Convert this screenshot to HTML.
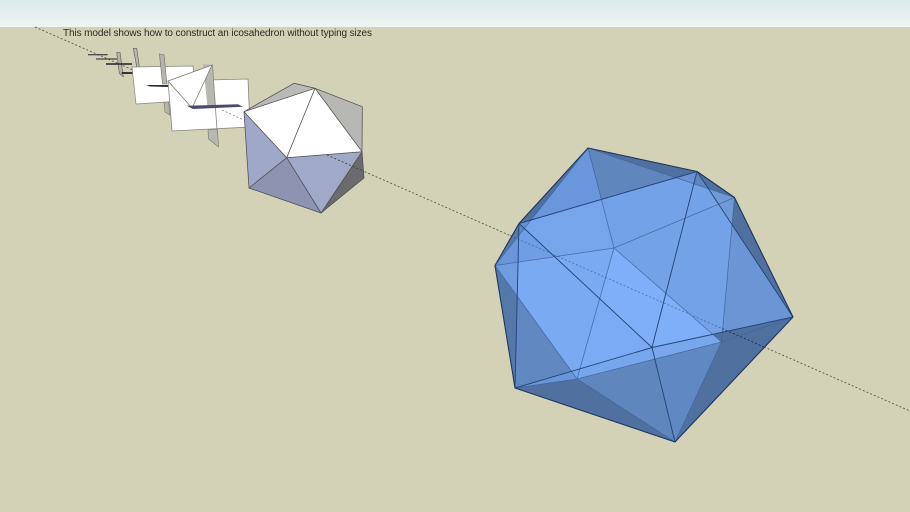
<!DOCTYPE html>
<html>
<head>
<meta charset="utf-8">
<style>
html,body{margin:0;padding:0;background:#d4d2b6;width:910px;height:512px;overflow:hidden}
svg{display:block}
text{font-family:"Liberation Sans",sans-serif}
.soft{filter:blur(.3px)}
</style>
</head>
<body>
<svg width="910" height="512" viewBox="0 0 910 512" xmlns="http://www.w3.org/2000/svg">
<defs>
<linearGradient id="sky" x1="0" y1="0" x2="0" y2="1">
<stop offset="0" stop-color="#dbe9e9"/>
<stop offset="1" stop-color="#eef4f2"/>
</linearGradient>
<clipPath id="f1"><polygon points="588,148 519,223.5 697,171.5"/></clipPath>
<clipPath id="f2"><polygon points="519,223.5 652,347.5 697,171.5"/></clipPath>
<clipPath id="f3"><polygon points="519,223.5 515,388 652,347.5"/></clipPath>
<clipPath id="f4"><polygon points="515,388 675,442 652,347.5"/></clipPath>
<clipPath id="f5"><polygon points="652,347.5 675,442 793,317"/></clipPath>
<clipPath id="f6"><polygon points="652,347.5 793,317 697,171.5"/></clipPath>
<clipPath id="f7"><polygon points="697,171.5 734.5,197.5 793,317"/></clipPath>
<clipPath id="f8"><polygon points="495,265.5 519,223.5 515,388"/></clipPath>
<polygon id="agp" points="588,148 495,265.5 614,248"/>
<polygon id="gpr" points="495,265.5 614,248 577,379"/>
<polygon id="apc" points="588,148 614,248 734.5,197.5"/>
<polygon id="pqr" points="614,248 721.5,342 577,379"/>
<polygon id="cpq" points="734.5,197.5 614,248 721.5,342"/>
<polygon id="grf" points="495,265.5 577,379 515,388"/>
<polygon id="fre" points="515,388 577,379 675,442"/>
<polygon id="req" points="577,379 675,442 721.5,342"/>
<polygon id="qed" points="721.5,342 675,442 793,317"/>
<polygon id="cqd" points="734.5,197.5 721.5,342 793,317"/>
</defs>

<rect width="910" height="512" fill="#d4d2b6"/>
<rect width="910" height="27" fill="url(#sky)"/>
<text x="63" y="36" font-size="10" fill="#2a2a20" textLength="309" lengthAdjust="spacing">This model shows how to construct an icosahedron without typing sizes</text>

<g class="soft">
<!-- axis -->
<line x1="35" y1="27" x2="910" y2="411" stroke="#5a5a4e" stroke-width=".9" stroke-dasharray="2 2"/>

<!-- small steps -->
<g stroke="#66665e" stroke-width=".7">
<polygon points="116.7,52.3 120,52.3 123.3,76.7 119.3,73.3" fill="#b4b4a8"/>
<polygon points="133.3,48.3 136.7,48.3 139.5,68 137,68" fill="#b8b8ac"/>
</g>
<g stroke="#23232a" fill="none">
<line x1="88" y1="54.7" x2="107.7" y2="54.7" stroke-width="1"/>
<line x1="96" y1="59" x2="117" y2="59" stroke-width="1.1"/>
<line x1="106" y1="64" x2="132" y2="64" stroke-width="1.4"/>
<line x1="121.7" y1="73" x2="133" y2="73" stroke-width="1.8"/>
</g>

<!-- plane 1 -->
<polygon points="159.5,54 164,55 170,115 165,112" fill="#b4b4aa" stroke="#77776f" stroke-width=".6"/>
<polygon points="132,67 193,66 197,100 136,104" fill="#fff" stroke="#85857a" stroke-width=".7"/>
<polygon points="159.5,54 164,55 167,84 162.5,84" fill="#b4b4aa" stroke="#77776f" stroke-width=".6"/>
<polygon points="146,85 168,85 168,87 150,86.5" fill="#2e2e38"/>

<!-- plane 2 -->
<polygon points="168,81 248,79 250,127 172,131" fill="#fff" stroke="#85857a" stroke-width=".8"/>
<line x1="222" y1="110" x2="244" y2="120" stroke="#77776f" stroke-width=".7" stroke-dasharray="2 2"/>
<polygon points="203,64 212,65 216,107 207.5,107" fill="#b8b8b2"/>
<polygon points="168,81 212,65 192,108" fill="#fff" stroke="#76766c" stroke-width=".7"/>
<polygon points="208,130 217.5,129.5 218.5,147 208.5,139" fill="#b8b8b2" stroke="#77776f" stroke-width=".6"/>
<line x1="212.5" y1="65" x2="217" y2="130" stroke="#88887e" stroke-width=".8"/>
<polygon points="186.7,105.7 238,104.3 243,106.7 193,109" fill="#4a4b6a"/>

<!-- small icosahedron -->
<g stroke-linejoin="round">
<polygon points="362,151.7 364,178 321,213" fill="#6b6b6e"/>
<polygon points="294,83.3 315,88.3 244,111.7" fill="#b9b9b5"/>
<polygon points="315,88.3 362.3,106.7 362,151.7" fill="#b7b7b3"/>
<polygon points="244,111.7 315,88.3 286.7,157.7" fill="#fff"/>
<polygon points="315,88.3 362,151.7 286.7,157.7" fill="#fff"/>
<polygon points="244,111.7 286.7,157.7 249,188" fill="#a0a8c9"/>
<polygon points="249,188 286.7,157.7 321,213" fill="#8d93b0"/>
<polygon points="286.7,157.7 362,151.7 321,213" fill="#a1a9c9"/>
<g stroke="#4c4c52" fill="none" stroke-width=".75">
<polyline points="244,111.7 294,83.3 315,88.3 362.3,106.7 362,151.7 364,178 321,213 249,188 244,111.7"/>
<polyline points="244,111.7 315,88.3 362,151.7 321,213 286.7,157.7 249,188"/>
<line x1="286.7" y1="157.7" x2="315" y2="88.3"/>
<line x1="286.7" y1="157.7" x2="362" y2="151.7"/>
<line x1="286.7" y1="157.7" x2="244" y2="111.7"/>
</g>
<line x1="327" y1="155" x2="364" y2="171.4" stroke="#3a3a3e" stroke-width=".8" stroke-dasharray="2 2"/>
</g>

<!-- big icosahedron -->
<polygon points="588,148 697,171.5 734.5,197.5 793,317 675,442 515,388 495,265.5 519,223.5" fill="#50709f"/>

<g clip-path="url(#f1)">
<rect x="480" y="140" width="330" height="310" fill="#50709f"/>
<use href="#agp" fill="#6a96dc"/>
<use href="#apc" fill="#5f86bd"/>
</g>
<g clip-path="url(#f2)">
<rect x="480" y="140" width="330" height="310" fill="#6a92d0"/>
<use href="#agp" fill="#76a5ec"/>
<use href="#apc" fill="#74a2e8"/>
<use href="#gpr" fill="#7aaaf2"/>
<use href="#cpq" fill="#74a2e6"/>
<use href="#pqr" fill="#7eaff8"/>
</g>
<g clip-path="url(#f3)">
<rect x="480" y="140" width="330" height="310" fill="#6288c2"/>
<use href="#agp" fill="#709ee4"/>
<use href="#gpr" fill="#7aaaf2"/>
<use href="#grf" fill="#6288c2"/>
<use href="#pqr" fill="#7aabf4"/>
</g>
<g clip-path="url(#f4)">
<rect x="480" y="140" width="330" height="310" fill="#50709f"/>
<use href="#grf" fill="#6a96d8"/>
<use href="#gpr" fill="#76a5ec"/>
<use href="#pqr" fill="#76a6ec"/>
<use href="#req" fill="#5f86bd"/>
<use href="#fre" fill="#50709f"/>
</g>
<g clip-path="url(#f5)">
<rect x="480" y="140" width="330" height="310" fill="#50709f"/>
<use href="#pqr" fill="#78a7ec"/>
<use href="#req" fill="#6088c2"/>
<use href="#qed" fill="#50709f"/>
<use href="#cqd" fill="#50709f"/>
</g>
<g clip-path="url(#f6)">
<rect x="480" y="140" width="330" height="310" fill="#5f86bd"/>
<use href="#cpq" fill="#74a2e6"/>
<use href="#apc" fill="#74a2e6"/>
<use href="#pqr" fill="#7eaff8"/>
<use href="#cqd" fill="#6b95d4"/>
</g>
<g clip-path="url(#f7)">
<rect x="480" y="140" width="330" height="310" fill="#50709f"/>
<use href="#apc" fill="#6f9ad6"/>
<use href="#cpq" fill="#6f9ad6"/>
</g>
<g clip-path="url(#f8)">
<rect x="480" y="140" width="330" height="310" fill="#5578aa"/>
<use href="#agp" fill="#6a95da"/>
<use href="#gpr" fill="#709ce0"/>
</g>

<!-- faint axis inside -->
<line x1="510" y1="235.5" x2="722" y2="328.5" stroke="#2f4e80" stroke-width=".8" stroke-dasharray="2 2" opacity=".65"/>
<line x1="722" y1="328.5" x2="764.5" y2="347.2" stroke="#1f2f4c" stroke-width=".9" stroke-dasharray="2 2"/>

<!-- back edges -->
<g stroke="#3f659f" stroke-width=".8" fill="none" opacity=".85">
<line x1="588" y1="148" x2="614" y2="248"/>
<line x1="495" y1="265.5" x2="614" y2="248"/>
<line x1="734.5" y1="197.5" x2="614" y2="248"/>
<line x1="614" y1="248" x2="577" y2="379"/>
<line x1="614" y1="248" x2="721.5" y2="342"/>
<line x1="495" y1="265.5" x2="577" y2="379"/>
<line x1="577" y1="379" x2="515" y2="388"/>
<line x1="577" y1="379" x2="675" y2="442"/>
<line x1="577" y1="379" x2="721.5" y2="342"/>
<line x1="721.5" y1="342" x2="675" y2="442"/>
<line x1="721.5" y1="342" x2="734.5" y2="197.5"/>
<line x1="721.5" y1="342" x2="793" y2="317"/>
<line x1="588" y1="148" x2="495" y2="265.5"/>
<line x1="588" y1="148" x2="734.5" y2="197.5"/>
</g>

<!-- front edges -->
<g stroke="#24467c" stroke-width=".95" fill="none">
<line x1="519" y1="223.5" x2="697" y2="171.5"/>
<line x1="697" y1="171.5" x2="652" y2="347.5"/>
<line x1="515" y1="388" x2="652" y2="347.5"/>
<line x1="652" y1="347.5" x2="793" y2="317"/>
<line x1="652" y1="347.5" x2="675" y2="442"/>
<line x1="519" y1="223.5" x2="652" y2="347.5"/>
<line x1="519" y1="223.5" x2="515" y2="388"/>
<line x1="697" y1="171.5" x2="793" y2="317"/>
</g>

<!-- outline -->
<polygon points="588,148 697,171.5 734.5,197.5 793,317 675,442 515,388 495,265.5 519,223.5" fill="none" stroke="#1f3560" stroke-width="1.1" stroke-linejoin="round"/>
</g>
</svg>
</body>
</html>
